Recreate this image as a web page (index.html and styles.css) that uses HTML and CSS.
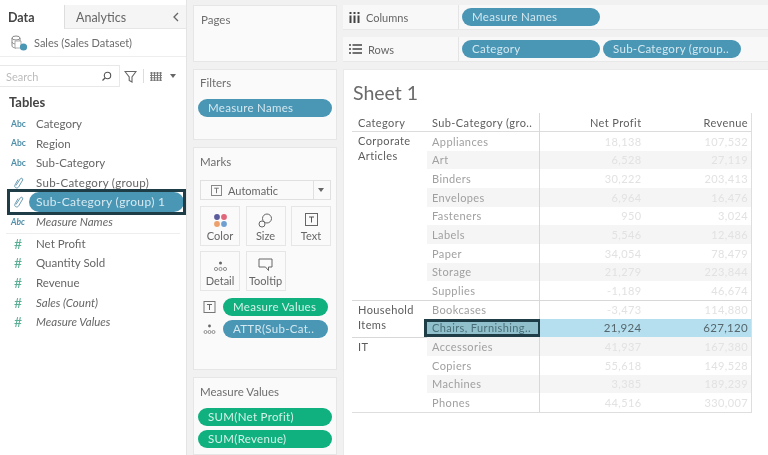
FILE: index.html
```html
<!DOCTYPE html>
<html lang="en">
<head>
<meta charset="utf-8">
<title>Sheet 1</title>
<link rel="stylesheet" href="styles.css">
</head>
<body>
<div class="app">
  <aside class="data-pane">
    <div class="tabs">
      <div class="tab tab-active">Data</div>
      <div class="tab tab-other"><span>Analytics</span>
        <svg class="chev" width="8" height="10" viewBox="0 0 8 10"><path d="M6 1 2 5l4 4" fill="none" stroke="#666" stroke-width="1.3"/></svg>
      </div>
    </div>
    <div class="source">
      <svg width="20" height="20" viewBox="0 0 20 20"><ellipse cx="7" cy="5" rx="4" ry="2" fill="none" stroke="#888"/><path d="M3 5v8c0 1 2 2 4 2M11 5v3M3 9c0 1 2 2 4 2" fill="none" stroke="#888"/><path d="M6 8h6v7H6z" fill="#fff" stroke="#999" stroke-width=".8"/><circle cx="14.5" cy="14" r="3.6" fill="#4a96b5"/></svg>
      <span>Sales (Sales Dataset)</span>
    </div>
    <div class="search-row">
      <div class="search"><span>Search</span>
        <svg width="11" height="11" viewBox="0 0 11 11"><circle cx="6.5" cy="4.5" r="3.2" fill="none" stroke="#555" stroke-width="1.1"/><path d="M4 7 1.5 9.5" stroke="#555" stroke-width="1.3"/></svg>
      </div>
      <svg width="13" height="13" viewBox="0 0 13 13"><path d="M1 1.5h11L8 7v5L5.2 10.5V7z" fill="none" stroke="#666" stroke-width="1.1"/></svg>
      <i class="vsep"></i>
      <svg width="12" height="9" viewBox="0 0 12 9"><path d="M0 1h12M0 3.4h12M0 5.8h12M0 8.2h12M1.5 0v9M4.5 0v9M7.5 0v9M10.5 0v9" stroke="#777" stroke-width="1"/></svg>
      <i class="caret"></i>
    </div>
    <div class="tables-title">Tables</div>
    <ul class="fields">
      <li class="field"><span class="ic abc">Abc</span><span>Category</span></li>
      <li class="field"><span class="ic abc">Abc</span><span>Region</span></li>
      <li class="field"><span class="ic abc">Abc</span><span>Sub-Category</span></li>
      <li class="field wider"><span class="ic"><svg class="clip" width="11" height="14" viewBox="0 0 11 14"><path d="M3 9.5 7.3 2.8c.9-1.3 3-.4 2.4 1.2L5.6 11c-1.2 1.9-4.6.8-3.800-1.700L5 3.600" fill="none" stroke="#6c9db3" stroke-width="1"/></svg></span><span>Sub-Category (group)</span></li>
      <li class="field selected"><span class="ic"><svg class="clip" width="11" height="14" viewBox="0 0 11 14"><path d="M3 9.5 7.3 2.8c.9-1.3 3-.4 2.4 1.2L5.6 11c-1.2 1.9-4.6.8-3.800-1.700L5 3.600" fill="none" stroke="#6c9db3" stroke-width="1"/></svg></span><span class="sel-pill">Sub-Category (group) 1</span></li>
      <li class="field calc"><span class="ic abc">Abc</span><span>Measure Names</span></li>
      <li class="divider"></li>
      <li class="field"><span class="ic hash">#</span><span>Net Profit</span></li>
      <li class="field"><span class="ic hash">#</span><span>Quantity Sold</span></li>
      <li class="field"><span class="ic hash">#</span><span>Revenue</span></li>
      <li class="field calc"><span class="ic hash">#</span><span>Sales (Count)</span></li>
      <li class="field calc"><span class="ic hash">#</span><span>Measure Values</span></li>
    </ul>
  </aside>

  <section class="cards">
    <div class="card pages"><div class="card-title">Pages</div></div>
    <div class="card filters">
      <div class="card-title">Filters</div>
      <div class="pill blue">Measure Names</div>
    </div>
    <div class="card marks">
      <div class="card-title">Marks</div>
      <div class="mark-select">
        <div class="ms-label"><svg class="t-ic" width="11" height="11" viewBox="0 0 11 11"><rect x=".5" y=".5" width="10" height="10" fill="none" stroke="#888"/><path d="M3.2 3.2h4.6M5.5 3.2v5" stroke="#777"/></svg><span>Automatic</span></div>
        <div class="ms-arrow"><i class="caret"></i></div>
      </div>
      <div class="mark-grid">
        <div class="mark-btn"><svg width="15" height="15" viewBox="0 0 15 15"><circle cx="4" cy="4" r="2.9" fill="#5b5b9e"/><circle cx="11" cy="4" r="2.9" fill="#e0667a"/><circle cx="4" cy="11" r="2.9" fill="#eda06d"/><circle cx="11" cy="11" r="2.9" fill="#6f9fd0"/></svg><span>Color</span></div>
        <div class="mark-btn"><svg width="15" height="15" viewBox="0 0 15 15"><circle cx="9" cy="5.5" r="4.5" fill="none" stroke="#666"/><circle cx="4" cy="11" r="3" fill="#fafafa" stroke="#666"/></svg><span>Size</span></div>
        <div class="mark-btn"><svg width="13" height="13" viewBox="0 0 13 13"><rect x=".5" y=".5" width="12" height="12" fill="none" stroke="#666"/><path d="M4 4h5M6.5 4v5.5" stroke="#555"/></svg><span>Text</span></div>
        <div class="mark-btn"><svg width="15" height="15" viewBox="0 0 15 15"><circle cx="7.5" cy="5" r="1.5" fill="#666"/><circle cx="3" cy="11" r="1.6" fill="none" stroke="#777" stroke-width=".8"/><circle cx="7.5" cy="11" r="1.6" fill="none" stroke="#777" stroke-width=".8"/><circle cx="12" cy="11" r="1.6" fill="none" stroke="#777" stroke-width=".8"/></svg><span>Detail</span></div>
        <div class="mark-btn"><svg width="15" height="14" viewBox="0 0 15 14"><path d="M1 1h13v8h-3.500v3.500L7.500 9H1z" fill="none" stroke="#666"/></svg><span>Tooltip</span></div>
      </div>
      <div class="mark-pill"><svg width="12" height="12" viewBox="0 0 12 12"><rect x=".5" y=".5" width="11" height="11" fill="none" stroke="#777"/><path d="M3.500 3.500h5M6 3.500V9" stroke="#666"/></svg><div class="pill green">Measure Values</div></div>
      <div class="mark-pill"><svg width="13" height="12" viewBox="0 0 13 12"><circle cx="6.500" cy="3" r="1.400" fill="#666"/><circle cx="2.500" cy="9" r="1.500" fill="none" stroke="#777" stroke-width=".8"/><circle cx="6.500" cy="9" r="1.500" fill="none" stroke="#777" stroke-width=".8"/><circle cx="10.500" cy="9" r="1.500" fill="none" stroke="#777" stroke-width=".8"/></svg><div class="pill blue">ATTR(Sub-Cat..</div></div>
    </div>
    <div class="card measure">
      <div class="card-title">Measure Values</div>
      <div class="pill green">SUM(Net Profit)</div>
      <div class="pill green">SUM(Revenue)</div>
    </div>
  </section>

  <main class="view">
    <div class="shelf">
      <div class="shelf-label"><svg width="11" height="11" viewBox="0 0 11 11"><path d="M1.500 0v2M5.500 0v2M9.500 0v2M1.500 3.500V11M5.500 3.500V11M9.500 3.500V11" stroke="#444" stroke-width="2"/></svg><span>Columns</span></div>
      <div class="shelf-pills"><div class="pill blue wide">Measure Names</div></div>
    </div>
    <div class="shelf">
      <div class="shelf-label"><svg width="13" height="10" viewBox="0 0 13 10"><path d="M0 1h2M3.500 1H13M0 5h2M3.500 5H13M0 9h2M3.500 9H13" stroke="#444" stroke-width="1.500"/></svg><span>Rows</span></div>
      <div class="shelf-pills"><div class="pill blue wide">Category</div><div class="pill blue wide">Sub-Category (group..</div></div>
    </div>
    <div class="sheet">
      <h1 class="sheet-title">Sheet 1</h1>
      <div class="crosstab">
        <div class="hd">Category</div><div class="hd sub">Sub-Category (gro..</div><div class="hd num">Net Profit</div><div class="hd num end">Revenue</div>

        <div class="cat c1">Corporate Articles</div>
        <div class="sub">Appliances</div><div class="num">18,138</div><div class="num end">107,532</div>
        <div class="sub band">Art</div><div class="num band">6,528</div><div class="num end band">27,119</div>
        <div class="sub">Binders</div><div class="num">30,222</div><div class="num end">203,413</div>
        <div class="sub band">Envelopes</div><div class="num band">6,964</div><div class="num end band">16,476</div>
        <div class="sub">Fasteners</div><div class="num">950</div><div class="num end">3,024</div>
        <div class="sub band">Labels</div><div class="num band">5,546</div><div class="num end band">12,486</div>
        <div class="sub">Paper</div><div class="num">34,054</div><div class="num end">78,479</div>
        <div class="sub band">Storage</div><div class="num band">21,279</div><div class="num end band">223,844</div>
        <div class="sub">Supplies</div><div class="num">-1,189</div><div class="num end">46,674</div>

        <div class="cat c2 rule">Household Items</div>
        <div class="sub rule">Bookcases</div><div class="num rule">-3,473</div><div class="num end rule">114,880</div>
        <div class="sub picked">Chairs, Furnishing..</div><div class="num hot">21,924</div><div class="num end hot">627,120</div>

        <div class="cat c3 rule">IT</div>
        <div class="sub band">Accessories</div><div class="num band">41,937</div><div class="num end band">167,380</div>
        <div class="sub">Copiers</div><div class="num">55,618</div><div class="num end">149,528</div>
        <div class="sub band">Machines</div><div class="num band">3,385</div><div class="num end band">189,239</div>
        <div class="sub">Phones</div><div class="num">44,516</div><div class="num end">330,007</div>
      </div>
    </div>
  </main>
</div>
</body>
</html>
```

FILE: styles.css
```css
* { box-sizing: border-box; }
html, body { margin: 0; padding: 0; }
body {
  width: 768px;
  height: 455px;
  overflow: hidden;
  background: #fff;
  font-family: "Lato", "Liberation Sans", sans-serif;
  font-size: 11.5px;
  color: #666;
}
ul { list-style: none; margin: 0; padding: 0; }

.app {
  display: grid;
  grid-template-columns: 187px 156px 1fr;
  height: 455px;
  padding-top: 5px;
  background: #f1f1f1;
  filter: blur(0.35px);
}

/* data pane */
.data-pane { background: #fff; border-right: 1px solid #e4e4e4; margin-top: -5px; padding-top: 5px; }
.tabs { display: flex; height: 24px; }
.tab { display: flex; align-items: center; font-size: 12.5px; padding-top: 1px; }
.tab-active { width: 64px; padding-left: 8px; font-weight: 700; color: #444; }
.tab-other { flex: 1; justify-content: space-between; padding: 1px 6px 0 11px; background: #f5f5f5; border-left: 1px solid #ddd; border-bottom: 1px solid #e6e6e6; color: #666; }
.source { display: flex; align-items: center; gap: 5px; height: 28px; padding-left: 9px; border-bottom: 1px solid #eee; font-size: 11px; color: #6c6c6c; }
.search-row { display: flex; align-items: center; height: 22px; margin-top: 8px; gap: 4px; }
.search { display: flex; align-items: center; justify-content: space-between; width: 120px; height: 22px; padding: 0 7px 0 6px; border: 1px solid #e8e8e8; border-left: 0; color: #bcbcbc; font-size: 11px; }
.vsep { width: 1px; height: 14px; background: #ddd; margin: 0 2px; }
.caret { display: inline-block; width: 0; height: 0; border-left: 3px solid transparent; border-right: 3px solid transparent; border-top: 4px solid #666; margin-left: 4px; }
.tables-title { margin-top: 7px; padding-left: 9px; font-weight: 700; font-size: 13px; color: #444; line-height: 16px; }
.fields { margin-top: 4px; }
.field { display: flex; align-items: center; height: 19.6px; font-size: 11.5px; color: #666; }
.wider { letter-spacing: .3px; }
.ic { width: 36px; flex: none; padding-left: 11px; display: flex; align-items: center; letter-spacing: 0; }
.abc { font-size: 8.5px; font-weight: 700; color: #4f8ea8; }
.hash { padding-left: 14px; font-size: 14px; color: #5aae94; font-weight: 400; font-style: normal; }
.clip { margin-left: 2px; }
.calc { font-style: italic; }
.divider { height: 1px; margin: 1px 6px 0; background: #eee; }
.selected { position: relative; }
.selected::after { content: ""; position: absolute; left: 7px; right: 0; top: -3px; bottom: -3px; border: 3px solid #1f3d47; pointer-events: none; }
.selected .ic { width: 29px; }
.sel-pill { flex: 1; height: 20px; line-height: 20px; padding-left: 7px; margin-right: 2px; border-radius: 10px; background: #4a96b5; color: #d6eaf1; font-size: 12px; letter-spacing: .35px; white-space: nowrap; }

/* middle cards */
.cards { display: flex; flex-direction: column; gap: 7px; padding: 0 6px; height: 450px; overflow: hidden; }
.card { background: #fafafa; border: 1px solid #e6e6e6; padding: 0 4px; flex: none; }
.card-title { font-size: 11.5px; color: #6e6e6e; line-height: 14px; padding: 7px 0 0 2px; }
.pages { height: 57px; padding-left: 5px; }
.filters { height: 71px; }
.filters .card-title { padding-top: 6px; }
.filters .pill { margin-top: 9px; }
.marks { height: 223px; }
.measure { height: 78px; }
.measure .pill { margin-top: 3.5px; }
.measure .card-title + .pill { margin-top: 9px; }

.pill { height: 18px; line-height: 18px; border-radius: 9px; padding-left: 10px; font-size: 11.5px; letter-spacing: .3px; white-space: nowrap; overflow: hidden; }
.blue { background: #4a96b5; color: #d3e8f0; }
.green { background: #10b07f; color: #d5f3e9; }

.mark-select { display: flex; height: 20px; margin: 11px 1px 0 2px; border: 1px solid #e0e0e0; background: #fafafa; font-size: 11px; }
.ms-label { flex: 1; display: flex; align-items: center; gap: 6px; padding-left: 10px; border-right: 1px solid #e0e0e0; }
.ms-arrow { width: 16px; display: flex; align-items: center; }
.ms-arrow .caret { margin-left: 4px; }
.mark-grid { display: grid; grid-template-columns: repeat(3, 40px); gap: 5px 5.5px; margin: 6px 0 0 2px; }
.mark-btn { height: 40px; border: 1px solid #e6e6e6; display: flex; flex-direction: column; align-items: center; justify-content: space-between; padding: 6px 0 3px; font-size: 11px; line-height: 13px; color: #666; }
.mark-pill { display: flex; align-items: center; height: 18px; margin-top: 4px; margin-right: 4px; }
.mark-pill svg { width: 13px; flex: none; margin-left: 5px; margin-right: 7px; }
.mark-pill .pill { flex: 1; }
.mark-grid + .mark-pill { margin-top: 7px; }

/* right column */
.view { display: flex; flex-direction: column; gap: 7px; min-width: 0; }
.shelf { display: flex; height: 25px; background: #f8f8f8; border-bottom: 1px solid #e8e8e8; flex: none; }
.shelf-label { width: 116px; display: flex; align-items: center; gap: 6px; padding-left: 6px; border-right: 1px solid #e4e4e4; font-size: 11px; color: #666; }
.shelf-pills { display: flex; align-items: center; gap: 3px; padding-left: 3px; }
.wide { width: 138px; padding-left: 10px; }
.sheet { flex: 1; background: #fff; border: 1px solid #eaeaea; border-right: 0; border-bottom: 0; padding: 11px 0 0 8px; min-height: 0; }
.sheet-title { margin: 0 0 0 1px; font-size: 19.5px; font-weight: 400; line-height: 24px; color: #6a6a6a; }

.crosstab { display: grid; grid-template-columns: 75px 113px 102px 110px; grid-template-rows: 19px repeat(15, 18.67px); margin-top: 8px; width: 400px; border-bottom: 1px solid #dedede; font-size: 11px; letter-spacing: .4px; color: #a0a0a0; }
.crosstab > div { display: flex; align-items: center; white-space: nowrap; }
.hd { color: #5e5e5e !important; border-bottom: 1px solid #dcdcdc; }
.crosstab > .hd:first-child { padding-left: 6px; }
.sub { padding-left: 5px; border-right: 1px solid #d8d8d8; overflow: hidden; }
.num { justify-content: flex-end; padding-right: .5px; color: #e2e2e2; }
.end { padding-right: 3px; border-right: 1px solid #dedede; }
.band { background: #f5f5f5; }
.cat { grid-column: 1; align-items: flex-start !important; white-space: normal !important; padding: 1px 4px 0 6px; color: #5c5c5c; line-height: 15px; }
.c1 { grid-row: 2 / span 9; }
.c2 { grid-row: 11 / span 2; }
.c3 { grid-row: 13 / span 4; }
.rule { border-top: 1px solid #d8d8d8; }
.hot { background: #b5dfee; color: #56666c; font-size: 11.5px; letter-spacing: .3px; }
.picked { background: #8fc0cc; border: 3px solid #1f3d47; margin-left: -3px; margin-right: -1px; padding-left: 5px; color: #4a6f78; }
```
